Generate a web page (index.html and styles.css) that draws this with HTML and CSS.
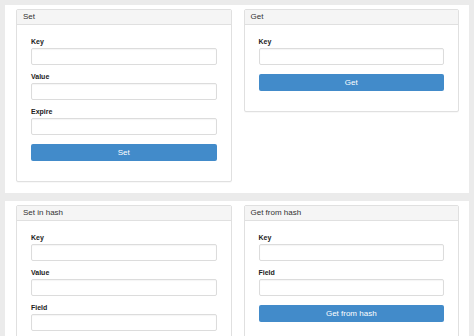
FILE: index.html
```html
<!DOCTYPE html>
<html>
<head>
  <meta charset="utf-8" />
  <title>Cache</title>
  <link rel="stylesheet" href="styles.css">
</head>
<body>
  <!-- Strings -->
  <div class="row">
    <div class="panel">
      <div class="panel-heading">Set</div>
      <div class="panel-body">
        <label>Key</label>
        <input type="text" />
        <label>Value</label>
        <input type="text" />
        <label>Expire</label>
        <input type="text" />
        <button>Set</button>
      </div>
    </div>
    <div class="panel">
      <div class="panel-heading">Get</div>
      <div class="panel-body">
        <label>Key</label>
        <input type="text" />
        <button>Get</button>
      </div>
    </div>
  </div>

  <!-- Hashes -->
  <div class="row">
    <div class="panel">
      <div class="panel-heading">Set in hash</div>
      <div class="panel-body">
        <label>Key</label>
        <input type="text" />
        <label>Value</label>
        <input type="text" />
        <label>Field</label>
        <input type="text" />
        <button>Set in hash</button>
      </div>
    </div>
    <div class="panel">
      <div class="panel-heading">Get from hash</div>
      <div class="panel-body">
        <label>Key</label>
        <input type="text" />
        <label>Field</label>
        <input type="text" />
        <button>Get from hash</button>
      </div>
    </div>
  </div>
</body>
</html>
```

FILE: styles.css
```css
html, body {
  margin: 0;
  padding: 0;
  font-family: "Liberation Sans", Arial, sans-serif;
  color: #333;
  background: #ebebeb;
}

body {
  padding: 5px 5px 0 5px;
}

/* Weisse Zeile mit zwei Panels */
.row {
  display: flex;
  align-items: flex-start;
  gap: 12px;
  background: #fff;
  padding: 4px 10px 11px 11px;
  margin-bottom: 8px;
}

.panel {
  flex: 1 1 0;
  min-width: 0;
  border: 1px solid #e0e0e0;
  border-radius: 2px;
  background: #fff;
  box-shadow: 0 1px 1px rgba(0, 0, 0, 0.03);
}

.panel-heading {
  height: 14px;
  line-height: 14px;
  padding: 0 6px;
  font-size: 8px;
  background: #f5f5f5;
  border-bottom: 1px solid #e0e0e0;
}

.panel-body {
  display: flex;
  flex-direction: column;
  padding: 12px 14px 20px 14px;
}

label {
  display: block;
  font-size: 7px;
  font-weight: bold;
  line-height: 10px;
  margin-bottom: 1px;
  color: #222;
}

input[type="text"] {
  width: 100%;
  height: 17px;
  margin: 0 0 7px;
  padding: 0 5px;
  border: 1px solid #dcdcdc;
  border-radius: 2px;
  box-sizing: border-box;
  box-shadow: inset 0 1px 1px rgba(0, 0, 0, 0.04);
}

button {
  width: 100%;
  height: 17px;
  margin-top: 2px;
  padding: 0;
  font-family: inherit;
  font-size: 8px;
  color: #fff;
  background-color: #428bca;
  border: none;
  border-radius: 2px;
}
```
